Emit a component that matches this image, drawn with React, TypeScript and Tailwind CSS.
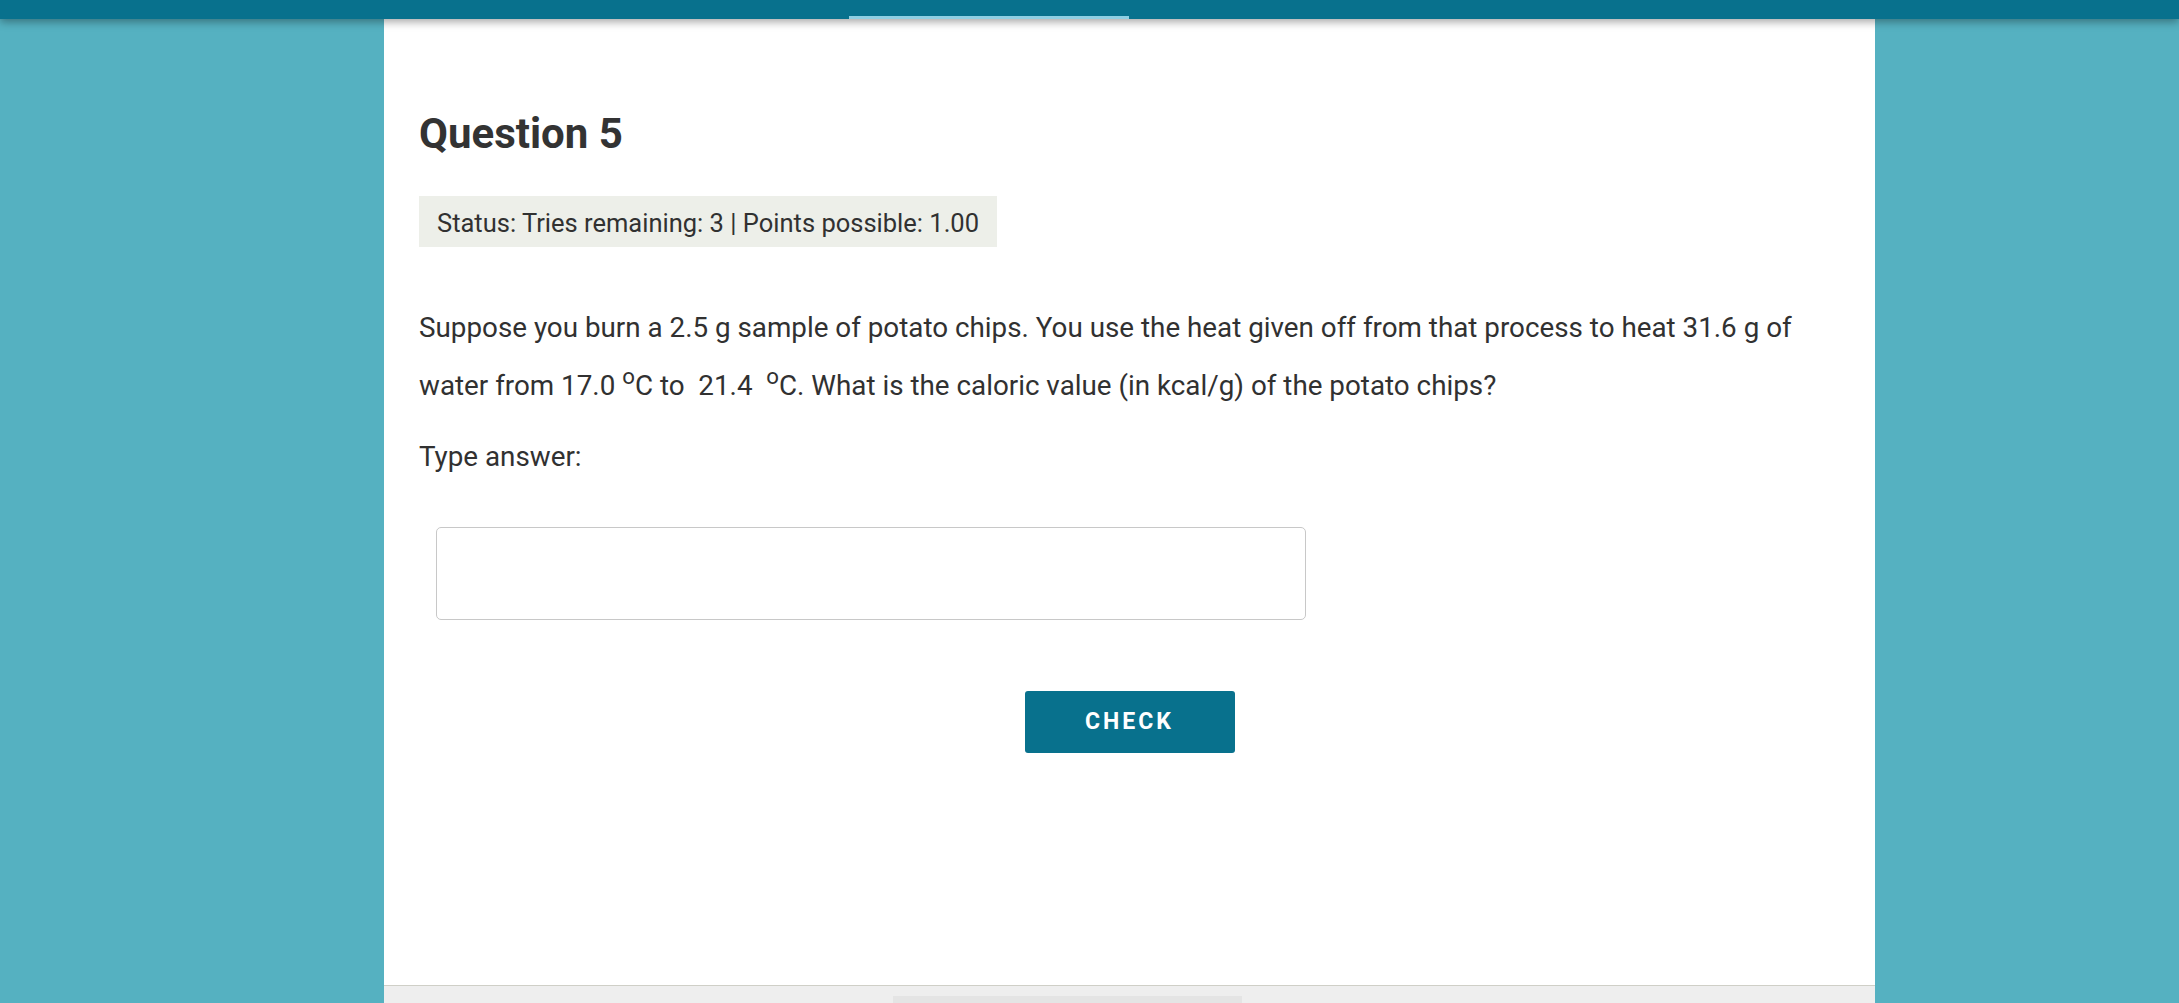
export default function App() {
  return (
    <div className="flex min-h-screen flex-col bg-[#55b1c1] font-['Roboto',sans-serif] text-[#313131]">
      <header className="relative z-10 flex h-[19px] items-end bg-[#08718d] shadow-[0_3px_8px_rgba(0,0,0,0.35)]">
        <span className="ml-[849px] h-[3px] w-[280px] bg-[#8ecfe3]" />
      </header>

      <main className="ml-[384px] flex h-[984px] w-[1491px] flex-col bg-white">
        <section className="flex flex-1 flex-col px-[35px] pt-[90px]">
          <h2 className="text-[42px] font-bold leading-[50px] text-[#333333]">Question 5</h2>

          <div className="mt-[37px] self-start bg-[#edefe9] px-[18px] pb-[11px] pt-[14px] text-[25.5px] leading-[26px]">
            Status: Tries remaining: 3 | Points possible: 1.00
          </div>

          <p className="mt-[52px] text-[27.8px] leading-[57.6px]">
            Suppose you burn a 2.5 g sample of potato chips. You use the heat given off from that
            process to heat 31.6 g of water from 17.0{" "}
            <span className="align-[0.5em] text-[0.8em] leading-none">o</span>C to&nbsp; 21.4&nbsp;{" "}
            <span className="align-[0.5em] text-[0.8em] leading-none">o</span>C. What is the caloric
            value (in kcal/g) of the potato chips?
          </p>

          <label className="mt-[14px] text-[27.8px] leading-[57.6px]">Type answer:</label>

          <input
            type="text"
            aria-label="Type answer"
            className="ml-[17px] mt-[41px] h-[93px] w-[870px] rounded-[5px] border border-[#c8c8c8] bg-white px-4 text-[25px] outline-none"
          />

          <button
            type="button"
            className="mt-[71px] h-[62px] w-[210px] self-center rounded-[3px] bg-[#08718d] text-[23px] font-bold uppercase tracking-[0.13em] text-white"
          >
            Check
          </button>
        </section>

        <footer className="flex h-[18px] border-t border-[#cfcfc7] bg-[#eeeeee] pt-[10px]">
          <span className="ml-[509px] w-[349px] bg-[#e4e4e4]" />
        </footer>
      </main>
    </div>
  );
}
